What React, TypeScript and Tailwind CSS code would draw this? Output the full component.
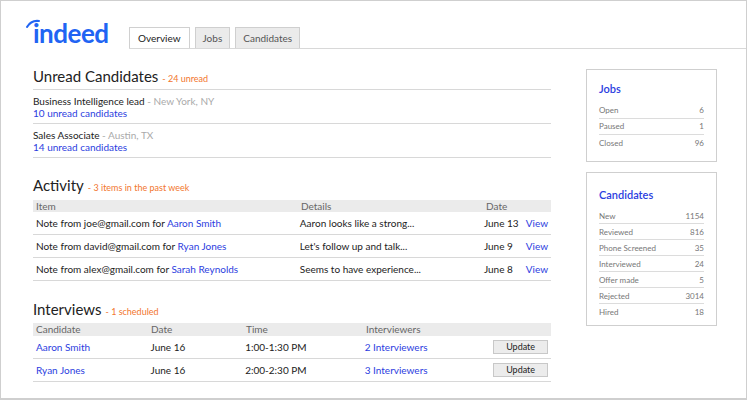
import React from "react";

const blue = "text-[#2b3de0]";

export default function App() {
  const jobs = [["Open", "6"], ["Paused", "1"], ["Closed", "96"]];
  const cands = [["New", "1154"], ["Reviewed", "816"], ["Phone Screened", "35"], ["Interviewed", "24"], ["Offer made", "5"], ["Rejected", "3014"], ["Hired", "18"]];
  const acts = [
    ["joe@gmail.com", "Aaron Smith", "Aaron looks like a strong...", "June 13"],
    ["david@gmail.com", "Ryan Jones", "Let's follow up and talk...", "June 9"],
    ["alex@gmail.com", "Sarah Reynolds", "Seems to have experience...", "June 8"],
  ];
  const ints = [["Aaron Smith", "June 16", "1:00-1:30 PM", "2 Interviewers"], ["Ryan Jones", "June 16", "2:00-2:30 PM", "3 Interviewers"]];
  return (
    <div className="w-[747px] h-[400px] bg-white border border-[#cfcfcf] border-b-2 overflow-hidden text-[#222] text-[10px]" style={{ fontFamily: "Lato, 'Open Sans', sans-serif" }}>
      <div className="flex items-end pl-[32px] pt-[16px]">
        <div className="relative w-[96px] h-[32px] mr-[0px]">
          <span className="absolute left-0 top-[-3px] text-[#2164f3] text-[26px] font-bold tracking-[-0.5px]" style={{ fontFamily: "Lato, sans-serif" }}>indeed</span>
          <svg className="absolute left-[-7px] top-[2px]" width="14" height="10" viewBox="0 0 14 10"><path d="M1 8 Q5 1 13 2" stroke="#2164f3" strokeWidth="2" fill="none" strokeLinecap="round" /></svg>
        </div>
        <div className="flex-1 flex items-end border-b border-[#d8d8d8] h-[32px] pl-0">
          <div className="flex gap-[5px]">
            <div className="h-[21px] px-[8px] border border-b-0 border-[#d0d0d0] bg-white flex items-center text-[10px] -mb-px">Overview</div>
            <div className="h-[21px] px-[7px] border border-b-0 border-[#cfcfcf] bg-[#ebebeb] text-[#555] flex items-center">Jobs</div>
            <div className="h-[21px] px-[7px] border border-b-0 border-[#cfcfcf] bg-[#ebebeb] text-[#555] flex items-center">Candidates</div>
          </div>
        </div>
      </div>
      <div className="flex pl-[32px] pt-[16px]">
        <div className="w-[518px]">
          <div className="flex items-baseline h-[24px]"><span className="text-[15px]">Unread Candidates</span><span className="text-[#f2762e] text-[9px] ml-[4px]">- 24 unread</span></div>
          <div className="border-t border-[#d8d8d8]">
            {[["Business Intelligence lead", "New York, NY", "10"], ["Sales Associate", "Austin, TX", "14"]].map(r => (
              <div key={r[0]} className="border-b border-[#d8d8d8] h-[34px] pt-[5px] leading-[12px]">
                <div>{r[0]} <span className="text-[#aaa]">- {r[1]}</span></div>
                <div className={blue}>{r[2]} unread candidates</div>
              </div>
            ))}
          </div>
          <div className="flex items-baseline mt-[16px] h-[26px]"><span className="text-[15px]">Activity</span><span className="text-[#f2762e] text-[9px] ml-[4px]">- 3 items in the past week</span></div>
          <div className="flex bg-[#ebebeb] h-[12px] items-center text-[#666] px-[3px]">
            <span className="w-[265px]">Item</span><span className="w-[185px]">Details</span><span>Date</span>
          </div>
          {acts.map(a => (
            <div key={a[0]} className="flex items-center h-[23px] border-b border-[#d8d8d8] px-[3px]">
              <span className="w-[265px]">Note from {a[0]} for <span className={blue}>{a[1]}</span></span>
              <span className="w-[185px]">{a[2]}</span>
              <span className="w-[42px]">{a[3]}</span>
              <span className={blue}>View</span>
            </div>
          ))}
          <div className="flex items-baseline mt-[17px] h-[25px]"><span className="text-[15px]">Interviews</span><span className="text-[#f2762e] text-[9px] ml-[4px]">- 1 scheduled</span></div>
          <div className="flex bg-[#ebebeb] h-[13px] items-center text-[#666] px-[3px]">
            <span className="w-[115px]">Candidate</span><span className="w-[95px]">Date</span><span className="w-[120px]">Time</span><span>Interviewers</span>
          </div>
          {ints.map(a => (
            <div key={a[0]} className="flex items-center h-[23px] border-b border-[#d8d8d8] px-[3px]">
              <span className={`w-[115px] ${blue}`}>{a[0]}</span>
              <span className="w-[95px]">{a[1]}</span>
              <span className="w-[120px]">{a[2]}</span>
              <span className={`w-[129px] ${blue}`}>{a[3]}</span>
              <span className="w-[55px] h-[14px] border border-[#c8c8c8] bg-[#ececec] flex items-center justify-center text-[9px]">Update</span>
            </div>
          ))}
        </div>
        <div className="ml-[35px] mt-[4px] flex flex-col gap-[10px] w-[131px]">
          {[["Jobs", jobs], ["Candidates", cands]].map(([t, rows]) => (
            <div key={t as string} className={`border border-[#cfcfcf] px-[12px] ${t === "Jobs" ? "pt-[11px] pb-[10px]" : "pt-[14px] pb-[5px]"}`}>
              <div className={`text-[11px] font-semibold ${blue} mb-[5px]`}>{t as string}</div>
              {(rows as string[][]).map((r, i, arr) => (
                <div key={r[0]} className={`flex justify-between h-[16px] items-center text-[8px] text-[#777] ${i < arr.length - 1 ? "border-b border-[#dcdcdc]" : ""}`}>
                  <span>{r[0]}</span><span>{r[1]}</span>
                </div>
              ))}
            </div>
          ))}
        </div>
      </div>
    </div>
  );
}
